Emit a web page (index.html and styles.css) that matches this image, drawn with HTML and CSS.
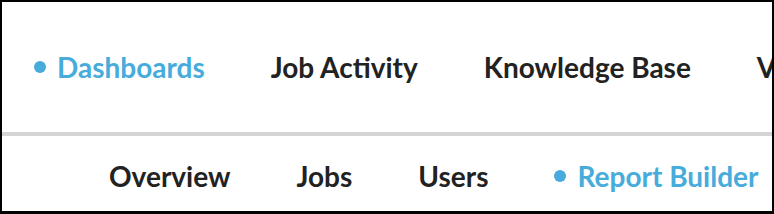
FILE: index.html
```html
<!DOCTYPE html>
<html>

<head>
	<title>Navigation</title>
	<link rel="stylesheet" href="styles.css">
</head>

<body>

	<div class="frame">
		<nav class="main_nav">
			<a href="#" class="nav_item active"><span class="dot"></span>Dashboards</a>
			<a href="#" class="nav_item">Job Activity</a>
			<a href="#" class="nav_item">Knowledge Base</a>
			<a href="#" class="nav_item">Visualizations</a>
		</nav>

		<nav class="sub_nav">
			<a href="#" class="nav_item">Overview</a>
			<a href="#" class="nav_item">Jobs</a>
			<a href="#" class="nav_item">Users</a>
			<a href="#" class="nav_item active"><span class="dot"></span>Report Builder</a>
		</nav>
	</div>

</body>

</html>
```

FILE: styles.css
```css
html,
body {
	margin: 0;
	padding: 0;
	background: #fff;
}

.frame {
	width: 774px;
	height: 214px;
	box-sizing: border-box;
	border: 2px solid #000;
	border-bottom-width: 3px;
	overflow: hidden;
	font-family: Lato, "Liberation Sans", sans-serif;
	font-weight: 700;
	font-size: 28px;
}

.main_nav,
.sub_nav {
	display: flex;
	gap: 66px;
	white-space: nowrap;
}

.main_nav {
	height: 130px;
	align-items: center;
	padding-left: 32px;
	border-bottom: 4px solid #d4d4d4;
}

.sub_nav {
	padding: 23px 0 0 107px;
}

.nav_item {
	display: flex;
	align-items: center;
	flex-shrink: 0;
	color: #222;
	text-decoration: none;
	line-height: normal;
}

.nav_item.active {
	color: #47acdb;
}

.dot {
	width: 12px;
	height: 12px;
	margin-right: 11px;
	border-radius: 50%;
	background: #47acdb;
}
```
